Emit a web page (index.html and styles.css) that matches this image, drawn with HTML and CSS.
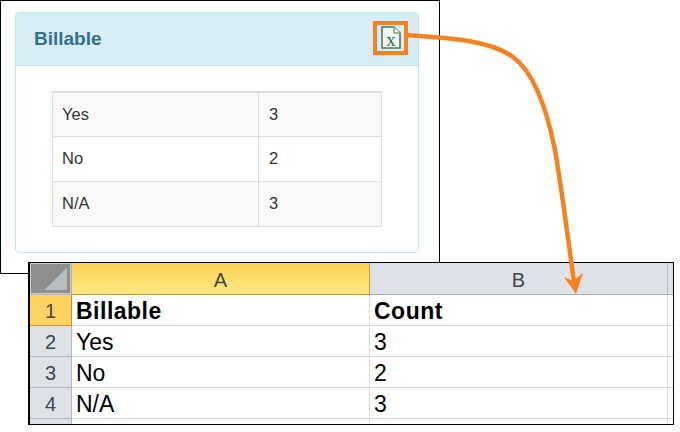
FILE: index.html
```html
<!DOCTYPE html>
<html lang="en">
<head>
    <meta charset="UTF-8">
    <title>Billable export</title>
    <link rel="stylesheet" href="styles.css">
</head>
<body>
    <div class="report">
        <div class="panel">
            <div class="panel-heading">
                <h3>Billable</h3>
                <div class="export-icon">
                    <svg width="20" height="23" viewBox="0 0 20 23">
                        <path d="M1 1H13L19 7V22H1Z" fill="#eef5f3" stroke="#4f7a63" stroke-width="1.6"/>
                        <path d="M13 1V7H19" fill="#fff" stroke="#8c9a5c" stroke-width="1.4"/>
                        <text x="10" y="20" class="export-x">x</text>
                    </svg>
                </div>
            </div>
            <div class="panel-body">
                <table class="summary">
                    <tr><td class="label-cell">Yes</td><td>3</td></tr>
                    <tr><td class="label-cell">No</td><td>2</td></tr>
                    <tr><td class="label-cell">N/A</td><td>3</td></tr>
                </table>
            </div>
        </div>
    </div>

    <div class="sheet">
        <div class="sheet-row sheet-head">
            <div class="corner"><span class="corner-mark"></span></div>
            <div class="col-head col-active">A</div>
            <div class="col-head">B</div>
            <div class="col-rest"></div>
        </div>
        <div class="sheet-row">
            <div class="row-num row-active">1</div>
            <div class="cell bold">Billable</div>
            <div class="cell bold">Count</div>
            <div class="cell-rest"></div>
        </div>
        <div class="sheet-row">
            <div class="row-num">2</div>
            <div class="cell">Yes</div>
            <div class="cell">3</div>
            <div class="cell-rest"></div>
        </div>
        <div class="sheet-row">
            <div class="row-num">3</div>
            <div class="cell">No</div>
            <div class="cell">2</div>
            <div class="cell-rest"></div>
        </div>
        <div class="sheet-row">
            <div class="row-num">4</div>
            <div class="cell">N/A</div>
            <div class="cell">3</div>
            <div class="cell-rest"></div>
        </div>
        <div class="sheet-row">
            <div class="row-num"></div>
            <div class="cell"></div>
            <div class="cell"></div>
            <div class="cell-rest"></div>
        </div>
    </div>

    <!-- callout arrow going from the export icon to the sheet -->
    <svg class="callout" width="680" height="432" viewBox="0 0 680 432">
        <path d="M407 35C450 38 490 40 513 57C535 73 548 115 555 150C561 185 567 230 574 282" fill="none" stroke="#f58220" stroke-width="4.5"/>
        <path d="M564 277L573 281L583 273L576 294Z" fill="#f58220"/>
    </svg>
</body>
</html>
```

FILE: styles.css
```css
* {
    box-sizing: border-box;
}

html, body {
    margin: 0;
    padding: 0;
}

body {
    width: 680px;
    height: 432px;
    position: relative;
    overflow: hidden;
    background-color: #fff;
    font-family: "Liberation Sans", Arial, sans-serif;
}

/* Browser capture behind the sheet */
.report {
    position: absolute;
    left: 0;
    top: 0;
    width: 440px;
    height: 274px;
    padding: 11px 20px 0 14px;
    background-color: #fff;
    border: 1px solid #000;
}

.panel {
    height: 241px;
    border: 1px solid #bce8f1;
    border-radius: 4px;
}

.panel-heading {
    height: 53px;
    padding: 0 10px 0 18px;
    display: flex;
    align-items: center;
    justify-content: space-between;
    background-color: #d9edf7;
    border-bottom: 1px solid #bce8f1;
    border-radius: 3px 3px 0 0;
}

.panel-heading h3 {
    margin: 0;
    font-size: 19px;
    font-weight: bold;
    color: #31708f;
}

.export-icon {
    width: 35px;
    height: 34px;
    margin-bottom: 3px;
    display: flex;
    align-items: center;
    justify-content: center;
    border: 4px solid #f58220;
}

.export-x {
    font-family: "Liberation Serif", serif;
    font-size: 19px;
    fill: #3f6b50;
    text-anchor: middle;
}

.panel-body {
    padding: 25px 36px;
}

.summary {
    width: 330px;
    border-collapse: collapse;
    border-top: 2px solid #ddd;
    font-size: 16.5px;
    color: #333;
}

.summary td {
    height: 45px;
    padding: 0 10px;
    border: 1px solid #ddd;
}

.summary tr:first-child td {
    height: 44px;
}

.summary tr:nth-child(odd) td {
    background-color: #f9f9f9;
}

.summary .label-cell {
    width: 206px;
    padding-left: 9px;
}

/* Spreadsheet capture */
.sheet {
    position: absolute;
    left: 28px;
    top: 262px;
    width: 646px;
    height: 163px;
    overflow: hidden;
    background-color: #fff;
    border: solid #000;
    border-width: 1px 1px 1px 2px;
    font-size: 23px;
    color: #000;
}

.sheet-row {
    display: flex;
    height: 31px;
}

.sheet-head {
    height: 32px;
    font-size: 20px;
    color: #3f4752;
}

.corner {
    width: 42px;
    height: 32px;
    background-color: #fff;
    border-right: 1px solid #b0b4ba;
    border-bottom: 1px solid #b0b4ba;
}

.corner-mark {
    display: block;
    width: 41px;
    height: 31px;
    background: linear-gradient(135deg, transparent 50%, #b9bec3 50%) no-repeat right 3px bottom 3px / 23px 23px, #8f8f8f;
    border: 1px solid #c8cacc;
}

.col-head {
    width: 298px;
    padding-top: 3px;
    display: flex;
    align-items: center;
    justify-content: center;
    background-color: #dee1e6;
    border-right: 1px solid #b4b8be;
    border-bottom: 1px solid #a9adb3;
}

.col-active {
    background: linear-gradient(#fdd05a, #ffe97c);
    border-right-color: #c99a3c;
    border-bottom-color: #c8913a;
}

.col-rest {
    flex: 1;
    background-color: #dee1e6;
    border-bottom: 1px solid #a9adb3;
}

.row-num {
    width: 42px;
    padding-top: 3px;
    display: flex;
    align-items: center;
    justify-content: center;
    font-size: 20px;
    color: #3f4752;
    background-color: #dee1e6;
    border-right: 1px solid #b4b8be;
    border-bottom: 1px solid #b4b8be;
}

.row-active {
    background-color: #ffd35f;
    border-right-color: #c8913a;
    border-bottom-color: #c8913a;
}

.cell {
    width: 298px;
    padding: 3px 0 0 4px;
    display: flex;
    align-items: center;
    border-right: 1px solid #d9d9d9;
    border-bottom: 1px solid #d9d9d9;
}

.bold {
    font-weight: bold;
    letter-spacing: 0.5px;
}

.cell-rest {
    flex: 1;
    border-bottom: 1px solid #d9d9d9;
}

.callout {
    position: absolute;
    left: 0;
    top: 0;
}
```
